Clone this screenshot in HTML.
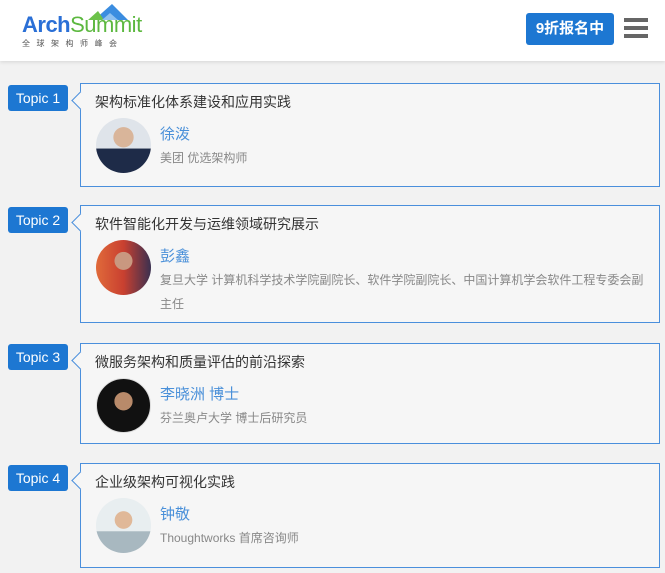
<!DOCTYPE html>
<html><head><meta charset="utf-8"><style>
*{margin:0;padding:0;box-sizing:border-box}
body{width:665px;height:573px;background:#f2f2f2;font-family:"Liberation Sans","Noto Sans CJK SC",sans-serif;position:relative;overflow:hidden}
.hd{position:absolute;left:0;top:0;width:665px;height:61px;background:#fff;box-shadow:0 1px 4px rgba(0,0,0,.12)}
.btn{position:absolute;left:526px;top:13px;width:88px;height:32px;background:#1d77d2;border-radius:3px;color:#fff;font-size:15px;font-weight:bold;text-align:center;line-height:32px}
.hb{position:absolute;left:624px;width:24px;height:4px;background:#666}
.tag{position:absolute;left:8px;width:60px;height:26px;background:#1d77d2;border-radius:3px;color:#fff;font-size:14px;text-align:center;line-height:26px}
.card{position:absolute;left:80px;width:580px;background:#f6f6f6;border:1px solid #4a8fdc}
.card:before{content:"";position:absolute;left:-7px;top:10px;width:12px;height:12px;background:#f6f6f6;border-left:1px solid #4a8fdc;border-bottom:1px solid #4a8fdc;transform:rotate(45deg)}
.t{position:absolute;left:14px;top:8px;font-size:14px;color:#333}
.av{position:absolute;left:15px;top:34px;width:55px;height:55px;border-radius:50%;background:#dde3ea;overflow:hidden}
.n{position:absolute;left:79px;top:39px;font-size:15px;color:#4a90d9}
.d{position:absolute;left:79px;top:62px;width:490px;font-size:12px;color:#888;line-height:24px}
</style></head><body>
<div class="hd">
<svg style="position:absolute;left:86px;top:3px" width="44" height="18"><polygon points="8,17 26,1 42,17" fill="#3b8de0"/><polygon points="2,17 12,8 18,17" fill="#6cc24a"/><polygon points="16,17 24,10 32,17" fill="#8fc1f0"/></svg>
<div style="position:absolute;left:22px;top:14px;font-size:22px;line-height:22px;letter-spacing:-0.5px"><span style="color:#2a6fd6;font-weight:bold">Arch</span><span style="color:#5cb83f">Summit</span></div>
<div style="position:absolute;left:22px;top:38px;font-size:8px;color:#555;letter-spacing:6.5px">全球架构师峰会</div>
<div class="btn">9折报名中</div>
<div class="hb" style="top:18px"></div><div class="hb" style="top:26px"></div><div class="hb" style="top:34px"></div>
</div>

<div class="tag" style="top:85px">Topic 1</div>
<div class="card" style="top:83px;height:104px"><div class="t">架构标准化体系建设和应用实践</div><div class="av" style="background:radial-gradient(circle at 50% 35%,#d9b59a 0 22%,transparent 23%),linear-gradient(#dfe4ea 55%,#1e2b48 56%)"></div><div class="n">徐泼</div><div class="d">美团 优选架构师</div></div>

<div class="tag" style="top:207px">Topic 2</div>
<div class="card" style="top:205px;height:118px"><div class="t">软件智能化开发与运维领域研究展示</div><div class="av" style="background:radial-gradient(circle at 50% 38%,#c99880 0 20%,transparent 21%),linear-gradient(90deg,#e06a3a,#c94030 50%,#3a3050)"></div><div class="n">彭鑫</div><div class="d">复旦大学 计算机科学技术学院副院长、软件学院副院长、中国计算机学会软件工程专委会副主任</div></div>

<div class="tag" style="top:344px">Topic 3</div>
<div class="card" style="top:343px;height:101px"><div class="t">微服务架构和质量评估的前沿探索</div><div class="av" style="background:radial-gradient(circle at 50% 42%,#b88a6a 0 22%,#111 23%);border:1px solid #ddd"></div><div class="n">李晓洲 博士</div><div class="d">芬兰奥卢大学 博士后研究员</div></div>

<div class="tag" style="top:465px">Topic 4</div>
<div class="card" style="top:463px;height:105px"><div class="t">企业级架构可视化实践</div><div class="av" style="background:radial-gradient(circle at 50% 40%,#e0b898 0 20%,transparent 21%),linear-gradient(#e8eef0 60%,#a8b8c0 61%)"></div><div class="n">钟敬</div><div class="d">Thoughtworks 首席咨询师</div></div>
</body></html>
